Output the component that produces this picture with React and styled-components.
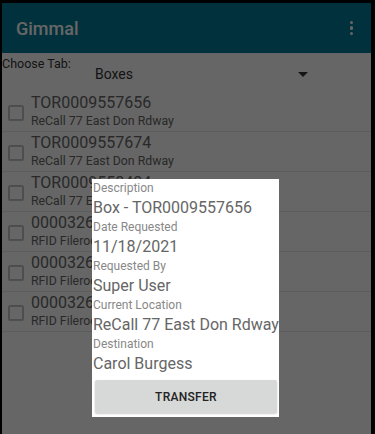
import React from "react";
import styled, { createGlobalStyle } from "styled-components";

const GlobalStyle = createGlobalStyle`
  html, body {
    margin: 0;
    padding: 0;
    background: #000;
  }
  body {
    font-family: Roboto, "Noto Sans", sans-serif;
  }
`;

const items = [
  { code: "TOR0009557656", place: "ReCall 77 East Don Rdway" },
  { code: "TOR0009557674", place: "ReCall 77 East Don Rdway" },
  { code: "TOR0009558484", place: "ReCall 77 East Don Rdway" },
  { code: "0000326112", place: "RFID Fileroom" },
  { code: "0000326113", place: "RFID Fileroom" },
  { code: "0000326114", place: "RFID Fileroom" },
];

const details = [
  { label: "Description", value: "Box - TOR0009557656" },
  { label: "Date Requested", value: "11/18/2021" },
  { label: "Requested By", value: "Super User" },
  { label: "Current Location", value: "ReCall 77 East Don Rdway" },
  { label: "Destination", value: "Carol Burgess" },
];

const App = () => {
  return (
    <>
      <GlobalStyle />
      <Screen>
        <AppBar>
          <Title>Gimmal</Title>
          <Kebab>
            <span />
            <span />
            <span />
          </Kebab>
        </AppBar>
        <TabPicker>
          <TabLabel>Choose Tab:</TabLabel>
          <Select>
            <SelectValue>Boxes</SelectValue>
            <Caret />
          </Select>
        </TabPicker>
        <List>
          {items.map((item) => (
            <Row key={item.code}>
              <Check />
              <RowText>
                <Code>{item.code}</Code>
                <Place>{item.place}</Place>
              </RowText>
            </Row>
          ))}
        </List>
        <Backdrop>
          <Dialog>
            {details.map((d) => (
              <Field key={d.label}>
                <FieldLabel>{d.label}</FieldLabel>
                <FieldValue>{d.value}</FieldValue>
              </Field>
            ))}
            <TransferButton>TRANSFER</TransferButton>
          </Dialog>
        </Backdrop>
      </Screen>
    </>
  );
};

export default App;

const Screen = styled.div`
  position: relative;
  margin: 3px 4px 0 2px;
  height: 431px;
  background: #ffffff;
  overflow: hidden;
`;

const AppBar = styled.div`
  display: flex;
  align-items: center;
  justify-content: space-between;
  height: 50px;
  padding: 0 18px 0 14px;
  background: #007a96;
`;

const Title = styled.div`
  font-size: 18px;
  font-weight: 500;
  color: #ffffff;
`;

const Kebab = styled.div`
  display: flex;
  flex-direction: column;
  gap: 2px;

  span {
    width: 3.5px;
    height: 3.5px;
    border-radius: 50%;
    background: #ffffff;
  }
`;

const TabPicker = styled.div`
  height: 39px;
  position: relative;
`;

const TabLabel = styled.div`
  padding-top: 3px;
  font-size: 12.5px;
  color: #333;
`;

const Select = styled.div`
  display: flex;
  align-items: center;
  justify-content: space-between;
  margin: -5px 0 0 93px;
  width: 213px;
`;

const SelectValue = styled.div`
  font-size: 14px;
  color: #333;
`;

const Caret = styled.div`
  width: 0;
  height: 0;
  border-left: 5px solid transparent;
  border-right: 5px solid transparent;
  border-top: 5px solid #333;
`;

const List = styled.div`
  display: flex;
  flex-direction: column;
`;

const Row = styled.div`
  display: flex;
  align-items: center;
  height: 39px;
  border-bottom: 1px solid #e6e6e6;
`;

const Check = styled.div`
  box-sizing: border-box;
  flex: none;
  width: 16px;
  height: 16px;
  margin: 3px 7px 0 6px;
  border: 2px solid #c4c4c4;
  border-radius: 2px;
`;

const RowText = styled.div`
  display: flex;
  flex-direction: column;
  margin-top: -2px;
`;

const Code = styled.div`
  font-size: 16px;
  line-height: 20px;
  color: #666;
`;

const Place = styled.div`
  font-size: 12.3px;
  line-height: 16px;
  color: #666;
`;

const Backdrop = styled.div`
  position: absolute;
  inset: 0;
  background: rgba(0, 0, 0, 0.6);
`;

const Dialog = styled.div`
  position: absolute;
  left: 90px;
  top: 176px;
  box-sizing: border-box;
  width: 187px;
  height: 238px;
  padding: 1px 2px 4px 1px;
  background: #ffffff;
  display: flex;
  flex-direction: column;
`;

const Field = styled.div`
  display: flex;
  flex-direction: column;
`;

const FieldLabel = styled.div`
  font-size: 12px;
  line-height: 16px;
  color: #888;
`;

const FieldValue = styled.div`
  font-size: 16px;
  line-height: 23px;
  color: #666;
  white-space: nowrap;
`;

const TransferButton = styled.button`
  margin: 5px 0 0 2px;
  height: 34px;
  border: none;
  border-radius: 2px;
  background: #d7d8d8;
  box-shadow: 0 1px 2px rgba(0, 0, 0, 0.2);
  font-family: Roboto, sans-serif;
  font-size: 12px;
  font-weight: 500;
  color: #222;
  letter-spacing: 0.3px;
`;
